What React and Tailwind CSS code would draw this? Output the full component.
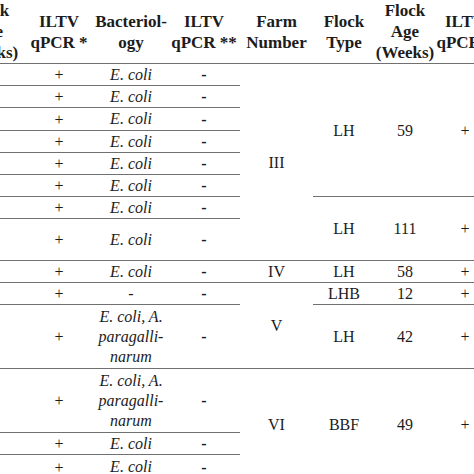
const line = 'border-b border-[#707070]';

const leftRows = [
  { h: 22, pcr: '+', bact: ['E. coli'], pcr2: '-' },
  { h: 22, pcr: '+', bact: ['E. coli'], pcr2: '-' },
  { h: 23, pcr: '+', bact: ['E. coli'], pcr2: '-' },
  { h: 20, pcr: '+', bact: ['E. coli'], pcr2: '-' },
  { h: 22, pcr: '+', bact: ['E. coli'], pcr2: '-' },
  { h: 22, pcr: '+', bact: ['E. coli'], pcr2: '-' },
  { h: 22, pcr: '+', bact: ['E. coli'], pcr2: '-' },
  { h: 42, pcr: '+', bact: ['E. coli'], pcr2: '-' },
  { h: 22, pcr: '+', bact: ['E. coli'], pcr2: '-' },
  { h: 21, pcr: '+', bact: ['-'], pcr2: '-', plain: true },
  { h: 64, pcr: '+', bact: ['E. coli, A.', 'paragalli-', 'narum'], pcr2: '-' },
  { h: 64, pcr: '+', bact: ['E. coli, A.', 'paragalli-', 'narum'], pcr2: '-' },
  { h: 21, pcr: '+', bact: ['E. coli'], pcr2: '-' },
  { h: 25, pcr: '+', bact: ['E. coli'], pcr2: '-', last: true },
];

// right-hand cells keyed by the row index where they start
const farms = {
  0: { span: 8, label: 'III' },
  8: { span: 1, label: 'IV' },
  9: { span: 2, label: 'V' },
  11: { span: 3, label: 'VI', last: true },
};

const flocks = {
  0: { span: 6, type: 'LH', age: '59', pcr: '+' },
  6: { span: 2, type: 'LH', age: '111', pcr: '+' },
  8: { span: 1, type: 'LH', age: '58', pcr: '+' },
  9: { span: 1, type: 'LHB', age: '12', pcr: '+' },
  10: { span: 1, type: 'LH', age: '42', pcr: '+' },
  11: { span: 3, type: 'BBF', age: '49', pcr: '+', last: true },
};

function Head({ lines }) {
  return (
    <th className={`${line} p-0 align-middle text-center font-bold text-[17px] leading-[21px]`}>
      {lines.map((l, i) => (
        <div key={i} className="whitespace-nowrap">{l}</div>
      ))}
    </th>
  );
}

export default function App() {
  return (
    <div
      className="w-[474px] h-[474px] overflow-hidden bg-white text-[#1c1c1c]"
      style={{ fontFamily: '"Liberation Serif", "Times New Roman", serif' }}
    >
      <table className="ml-[-46px] w-[541px] min-w-[541px] table-fixed border-collapse text-[16px] leading-[21px]">
        <colgroup>
          <col className="w-[70px]" />
          <col className="w-[70px]" />
          <col className="w-[74px]" />
          <col className="w-[72px]" />
          <col className="w-[73px]" />
          <col className="w-[62px]" />
          <col className="w-[60px]" />
          <col className="w-[60px]" />
        </colgroup>
        <thead>
          <tr className="h-[63px]">
            <Head lines={['Flock', 'Age', '(Weeks)']} />
            <Head lines={['ILTV', 'qPCR *']} />
            <Head lines={['Bacteriol-', 'ogy']} />
            <Head lines={['ILTV', 'qPCR **']} />
            <Head lines={['Farm', 'Number']} />
            <Head lines={['Flock', 'Type']} />
            <Head lines={['Flock', 'Age', '(Weeks)']} />
            <Head lines={['ILTV', 'qPCR *']} />
          </tr>
        </thead>
        <tbody>
          {leftRows.map((r, i) => {
            const b = r.last ? '' : line;
            const farm = farms[i];
            const flock = flocks[i];
            return (
              <tr key={i} style={{ height: r.h }}>
                <td className={`${b} p-0`} />
                <td className={`${b} p-0 text-center align-middle`}>{r.pcr}</td>
                <td
                  className={`${b} p-0 text-center align-middle leading-[20px] ${
                    r.plain ? '' : 'italic'
                  }`}
                >
                  {r.bact.map((t, k) => (
                    <div key={k} className="whitespace-nowrap">{t}</div>
                  ))}
                </td>
                <td className={`${b} p-0 text-center align-middle font-bold`}>{r.pcr2}</td>
                {farm && (
                  <td
                    rowSpan={farm.span}
                    className={`${farm.last ? '' : line} p-0 text-center align-middle`}
                  >
                    {farm.label}
                  </td>
                )}
                {flock && (
                  <>
                    <td
                      rowSpan={flock.span}
                      className={`${flock.last ? '' : line} p-0 text-center align-middle`}
                    >
                      {flock.type}
                    </td>
                    <td
                      rowSpan={flock.span}
                      className={`${flock.last ? '' : line} p-0 text-center align-middle`}
                    >
                      {flock.age}
                    </td>
                    <td
                      rowSpan={flock.span}
                      className={`${flock.last ? '' : line} p-0 text-center align-middle`}
                    >
                      {flock.pcr}
                    </td>
                  </>
                )}
              </tr>
            );
          })}
        </tbody>
      </table>
    </div>
  );
}
